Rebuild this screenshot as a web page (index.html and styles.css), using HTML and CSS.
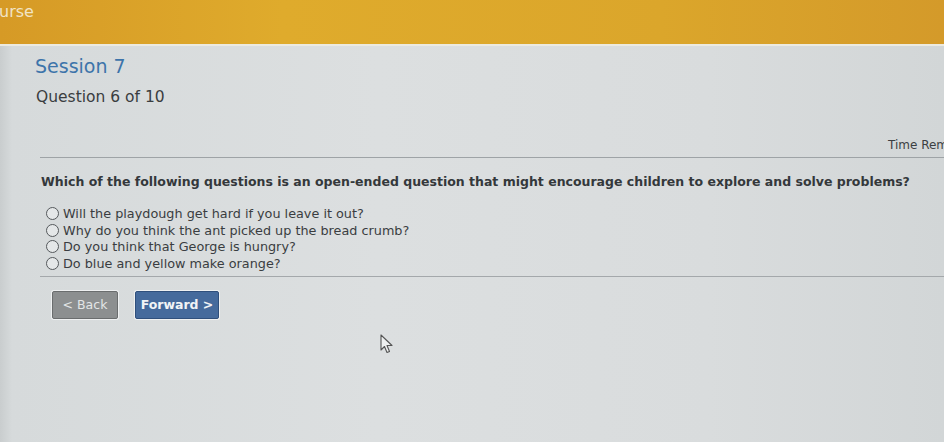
FILE: index.html
```html
<!DOCTYPE html>
<html>
<head>
<meta charset="utf-8">
<link rel="stylesheet" href="styles.css">
</head>
<body>
<div class="topbar"><span class="course">urse</span></div>
<div class="topline"></div>
<div class="page">
  <div class="session">Session 7</div>
  <div class="qnum">Question 6 of 10</div>
  <div class="timer">Time Remaining</div>
  <div class="rule"></div>
  <div class="question">Which of the following questions is an open-ended question that might encourage children to explore and solve problems?</div>
  <ul class="options">
    <li><span class="radio"></span>Will the playdough get hard if you leave it out?</li>
    <li><span class="radio"></span>Why do you think the ant picked up the bread crumb?</li>
    <li><span class="radio"></span>Do you think that George is hungry?</li>
    <li><span class="radio"></span>Do blue and yellow make orange?</li>
  </ul>
  <div class="rule rule2"></div>
  <div class="buttons">
    <button class="btn back">&lt; Back</button>
    <button class="btn fwd">Forward &gt;</button>
  </div>
  <svg class="cursor" width="14" height="20" viewBox="0 0 14 20"><path d="M1 1 L1 16 L4.5 12.5 L7 18.5 L9.5 17.5 L7 11.5 L12 11.5 Z" fill="#eef0f0" stroke="#555" stroke-width="1.1" stroke-linejoin="round"/></svg>
</div>
</body>
</html>
```
FILE: styles.css
```css
html, body { margin: 0; padding: 0; }
body {
  width: 944px;
  height: 442px;
  overflow: hidden;
  font-family: "DejaVu Sans", Verdana, sans-serif;
  background: linear-gradient(90deg, #c9cdce 0px, #d6dadb 12px, #dcdfe0 40%, #d9dcdd 75%, #d2d6d7 100%);
}
.topbar {
  height: 44px;
  background: linear-gradient(90deg, #d69a26 0%, #dfab2c 30%, #dba62b 70%, #d49a2a 100%);
  display: flex;
  align-items: flex-start;
}
.course {
  color: #f1e4c6;
  font-size: 16px;
  line-height: 16px;
  padding-top: 4px;
  margin-left: -1px;
}
.topline { height: 2px; background: #eceae0; }
.page { position: relative; padding-left: 35px; padding-top: 8px; }
.session {
  font-size: 19px;
  line-height: 24px;
  color: #3d74aa;
}
.qnum {
  margin-top: 10px;
  font-size: 15.5px;
  line-height: 19px;
  color: #3a3d40;
  padding-left: 1px;
}
.timer {
  margin-top: 31px;
  font-size: 12px;
  line-height: 14px;
  color: #3c3f42;
  padding-left: 853px;
  white-space: nowrap;
  overflow: hidden;
}
.rule {
  height: 1px;
  background: #9ea3a6;
  margin-top: 5px;
  margin-left: 5px;
}
.question {
  margin-top: 16px;
  margin-left: 6px;
  font-size: 12.5px;
  line-height: 16px;
  font-weight: bold;
  color: #34383b;
  white-space: nowrap;
}
.options {
  list-style: none;
  margin: 15px 0 0 11px;
  padding: 0;
}
.options li {
  display: flex;
  align-items: center;
  height: 16.7px;
  font-size: 12.8px;
  color: #3a3d41;
}
.radio {
  width: 11px;
  height: 11px;
  border: 1.3px solid #55595c;
  border-radius: 50%;
  background: #e4e7e8;
  margin-right: 4px;
  flex: none;
}
.rule2 { margin-top: 4px; background: #a4a8ab; }
.buttons {
  display: flex;
  gap: 17px;
  margin-top: 14px;
  margin-left: 17px;
}
.btn {
  height: 28px;
  font-family: "DejaVu Sans", Verdana, sans-serif;
  font-size: 12.5px;
  color: #f2f4f6;
  border-radius: 2px;
  padding: 0;
  box-shadow: 0 0 0 1px #eef0f1;
}
.back {
  width: 66px;
  background: #8c8f90;
  border: 1px solid #6a6d6e;
  color: #e3e6e7;
}
.fwd {
  width: 84px;
  background: #456a9c;
  border: 1px solid #2f4f7c;
  font-weight: bold;
}
.cursor { position: absolute; left: 380px; top: 288px; }
```
